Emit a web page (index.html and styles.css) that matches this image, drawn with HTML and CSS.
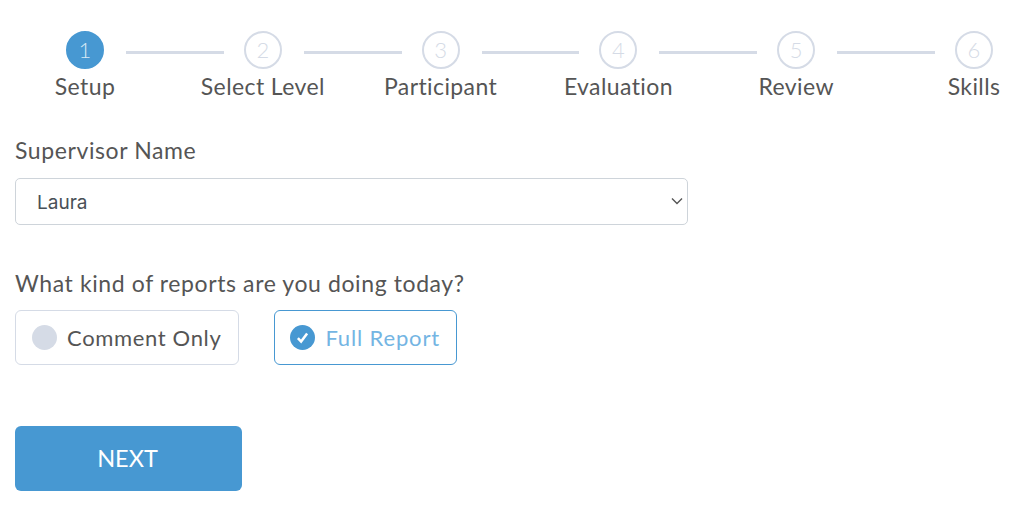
FILE: index.html
```html
<!DOCTYPE html>
<html lang="en">
<head>
    <meta charset="UTF-8">
    <meta name="viewport" content="width=device-width, initial-scale=1.0">
    <title>Setup</title>
    <link rel="stylesheet" href="styles.css">
</head>
<body>
    <div class="stepper">
        <div class="step active"><div class="step-num">1</div><div class="step-label">Setup</div></div>
        <div class="step-line"></div>
        <div class="step"><div class="step-num">2</div><div class="step-label">Select Level</div></div>
        <div class="step-line"></div>
        <div class="step"><div class="step-num">3</div><div class="step-label">Participant</div></div>
        <div class="step-line"></div>
        <div class="step"><div class="step-num">4</div><div class="step-label">Evaluation</div></div>
        <div class="step-line"></div>
        <div class="step"><div class="step-num">5</div><div class="step-label">Review</div></div>
        <div class="step-line"></div>
        <div class="step"><div class="step-num">6</div><div class="step-label">Skills</div></div>
    </div>

    <form class="form">
        <label class="field-label" for="supervisor">Supervisor Name</label>
        <div class="select-box">
            <select class="select" id="supervisor">
                <option>Laura</option>
            </select>
            <svg class="chevron" width="12" height="8" viewBox="0 0 12 8">
                <path d="M1 1.5 L6 6.5 L11 1.5" fill="none" stroke="#555" stroke-width="1.4"/>
            </svg>
        </div>

        <div class="field-label reports-label">What kind of reports are you doing today?</div>
        <div class="options">
            <div class="option">
                <span class="dot"></span>
                <span>Comment Only</span>
            </div>
            <div class="option selected">
                <span class="dot">
                    <svg width="15" height="15" viewBox="0 0 13 13">
                        <path d="M2.5 7 L5.3 10 L10.5 3" fill="none" stroke="#fff" stroke-width="2.2"/>
                    </svg>
                </span>
                <span>Full Report</span>
            </div>
        </div>

        <button class="next" type="button">NEXT</button>
    </form>
</body>
</html>
```

FILE: styles.css
```css
body {
    margin: 0;
    font-family: "Lato", "Open Sans", sans-serif;
    color: #555;
    background-color: #fff;
    overflow: hidden;
}

.stepper {
    display: flex;
    padding: 31px 31px 0 66px;
}

.step {
    display: flex;
    flex-direction: column;
    align-items: center;
    width: 38px;
}

.step-num {
    box-sizing: border-box;
    width: 38px;
    height: 38px;
    flex: none;
    border: 2px solid #d5dbe6;
    border-radius: 50%;
    color: #d5dbe6;
    font-size: 22px;
    font-weight: 300;
    line-height: 34px;
    text-align: center;
}

.active .step-num {
    background-color: #4798d2;
    border-color: #4798d2;
    color: #d9e9f5;
}

.step-label {
    margin-top: 2px;
    font-size: 23px;
    line-height: 30px;
    letter-spacing: 0.4px;
    white-space: nowrap;
}

.step-line {
    flex: 1;
    height: 3px;
    margin: 20px 20px 0 22px;
    background-color: #d5dbe6;
}

.form {
    padding: 0 15px;
}

.field-label {
    display: block;
    margin-top: 34px;
    font-size: 23px;
    line-height: 30px;
    letter-spacing: 0.6px;
}

.select-box {
    position: relative;
    width: 673px;
    margin-top: 13px;
}

.select {
    box-sizing: border-box;
    display: block;
    width: 100%;
    height: 47px;
    padding: 1px 21px 0;
    border: 1px solid #ced4da;
    border-radius: 5px;
    background-color: #fff;
    color: #495057;
    font-family: "Inter", sans-serif;
    font-size: 19px;
    appearance: none;
}

.chevron {
    position: absolute;
    right: 5px;
    top: 19px;
}

.reports-label {
    margin-top: 43px;
}

.options {
    display: flex;
    gap: 35px;
    margin-top: 12px;
}

.option {
    box-sizing: border-box;
    display: flex;
    align-items: center;
    gap: 10px;
    height: 55px;
    padding: 0 17px 0 16px;
    border: 1px solid #d5dbe6;
    border-radius: 6px;
    font-size: 22px;
    letter-spacing: 0.65px;
}

.option.selected {
    padding: 0 16px 0 15px;
    border-color: #4798d2;
    color: #74b5e3;
    letter-spacing: 0.85px;
}

.dot {
    display: flex;
    justify-content: center;
    align-items: center;
    width: 25px;
    height: 25px;
    border-radius: 50%;
    background-color: #d5dbe6;
}

.selected .dot {
    background-color: #4798d2;
}

.next {
    display: block;
    width: 227px;
    height: 65px;
    margin-top: 61px;
    padding: 0 2px 2px 0;
    border: none;
    border-radius: 6px;
    background-color: #4798d2;
    color: #fff;
    font-family: inherit;
    font-size: 23.5px;
}
```
